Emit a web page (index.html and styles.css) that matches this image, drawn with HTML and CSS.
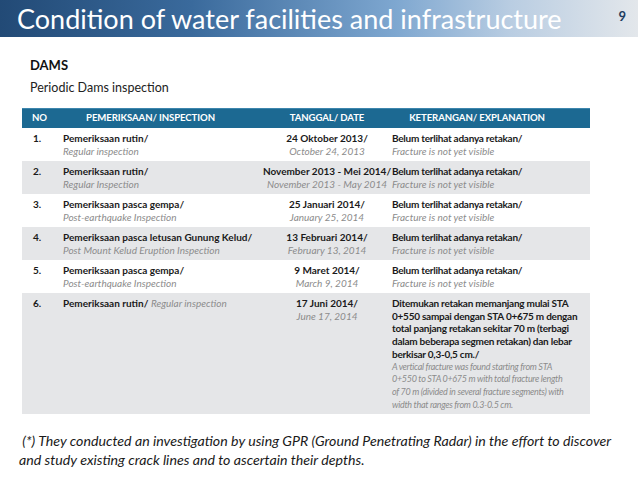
FILE: index.html
```html
<!DOCTYPE html>
<html lang="en">
<head>
<meta charset="utf-8">
<title>Condition of water facilities and infrastructure</title>
<link rel="stylesheet" href="styles.css">
</head>
<body>
<header class="title-bar">
  <h1 class="title">Condition of water facilities and infrastructure</h1>
  <span class="page-no">9</span>
</header>
<main class="content">
  <h2 class="section">DAMS</h2>
  <p class="subtitle">Periodic Dams inspection</p>
  <div class="table">
    <div class="row head">
      <div class="c-no">NO</div>
      <div class="c-insp">PEMERIKSAAN/ INSPECTION</div>
      <div class="c-date">TANGGAL/ DATE</div>
      <div class="c-exp">KETERANGAN/ EXPLANATION</div>
    </div>
    <div class="row">
      <div class="c-no b">1.</div>
      <div class="c-insp"><span class="b">Pemeriksaan rutin/</span><span class="i">Regular inspection</span></div>
      <div class="c-date"><span class="b">24 Oktober 2013/</span><span class="i">October 24, 2013</span></div>
      <div class="c-exp"><span class="b">Belum terlihat adanya retakan/</span><span class="i">Fracture is not yet visible</span></div>
    </div>
    <div class="row alt">
      <div class="c-no b">2.</div>
      <div class="c-insp"><span class="b">Pemeriksaan rutin/</span><span class="i">Regular Inspection</span></div>
      <div class="c-date"><span class="b">November 2013 - Mei 2014/</span><span class="i">November 2013 - May 2014</span></div>
      <div class="c-exp"><span class="b">Belum terlihat adanya retakan/</span><span class="i">Fracture is not yet visible</span></div>
    </div>
    <div class="row">
      <div class="c-no b">3.</div>
      <div class="c-insp"><span class="b">Pemeriksaan pasca gempa/</span><span class="i">Post-earthquake Inspection</span></div>
      <div class="c-date"><span class="b">25 Januari 2014/</span><span class="i">January 25, 2014</span></div>
      <div class="c-exp"><span class="b">Belum terlihat adanya retakan/</span><span class="i">Fracture is not yet visible</span></div>
    </div>
    <div class="row alt">
      <div class="c-no b">4.</div>
      <div class="c-insp"><span class="b">Pemeriksaan pasca letusan Gunung Kelud/</span><span class="i">Post Mount Kelud Eruption Inspection</span></div>
      <div class="c-date"><span class="b">13 Februari 2014/</span><span class="i">February 13, 2014</span></div>
      <div class="c-exp"><span class="b">Belum terlihat adanya retakan/</span><span class="i">Fracture is not yet visible</span></div>
    </div>
    <div class="row">
      <div class="c-no b">5.</div>
      <div class="c-insp"><span class="b">Pemeriksaan pasca gempa/</span><span class="i">Post-earthquake Inspection</span></div>
      <div class="c-date"><span class="b">9 Maret 2014/</span><span class="i">March 9, 2014</span></div>
      <div class="c-exp"><span class="b">Belum terlihat adanya retakan/</span><span class="i">Fracture is not yet visible</span></div>
    </div>
    <div class="row alt last">
      <div class="c-no b">6.</div>
      <div class="c-insp"><p class="inline"><span class="b">Pemeriksaan rutin/</span> <span class="i-inline">Regular inspection</span></p></div>
      <div class="c-date"><span class="b">17 Juni 2014/</span><span class="i">June 17, 2014</span></div>
      <div class="c-exp">
        <span class="b">Ditemukan retakan memanjang mulai STA</span>
        <span class="b">0+550 sampai dengan STA 0+675 m dengan</span>
        <span class="b">total panjang retakan sekitar 70 m (terbagi</span>
        <span class="b">dalam beberapa segmen retakan) dan lebar</span>
        <span class="b">berkisar 0,3-0,5 cm./</span>
        <span class="i small">A vertical fracture was found starting from STA</span>
        <span class="i small">0+550 to STA 0+675 m with total fracture length</span>
        <span class="i small">of 70 m (divided in several fracture segments) with</span>
        <span class="i small">width that ranges from 0.3-0.5 cm.</span>
      </div>
    </div>
  </div>
  <p class="note">&nbsp;(*) They conducted an investigation by using GPR (Ground Penetrating Radar) in the effort to discover and study existing crack lines and to ascertain their depths.</p>
</main>
</body>
</html>
```

FILE: styles.css
```css
* { box-sizing: border-box; }
html, body { margin: 0; padding: 0; background: #ffffff; }
body {
  width: 638px;
  height: 479px;
  overflow: hidden;
  font-family: Lato, "Open Sans", sans-serif;
  color: #1a1a1a;
}

.title-bar {
  height: 37px;
  display: flex;
  align-items: center;
  justify-content: space-between;
  padding: 0 12px 0 17px;
  background: linear-gradient(90deg, #224a76 0%, #3a6a9c 30%, #7ea7d0 62%, #b9cde2 80%, #e3e7eb 100%);
}
.title {
  margin: 0;
  font-family: Lato, "Open Sans", sans-serif;
  font-weight: 400;
  font-size: 27px;
  color: #ffffff;
  line-height: 37px;
  white-space: nowrap;
}
.page-no {
  font-weight: 700;
  font-size: 13px;
  color: #1f3d60;
  margin-top: -6px;
}

.content { padding: 0 0 0 22px; }

.section {
  margin: 19px 0 0 8px;
  font-size: 13px;
  font-weight: 700;
  line-height: 18px;
  color: #111;
}
.subtitle {
  margin: 5px 0 0 8px;
  font-size: 12.5px;
  line-height: 18px;
  color: #222;
}

.table {
  margin-top: 11px;
  width: 568px;
  font-family: Lato, "Open Sans", sans-serif;
}
.row {
  display: grid;
  grid-template-columns: 33px 207px 130px 1fr;
  min-height: 33px;
  padding: 4px 0 3px;
  font-size: 10px;
  line-height: 12.7px;
  background: #ffffff;
}
.row.alt { background: #e5e6e8; }
.row.last { padding-bottom: 3px; }
.row.head {
  min-height: 20px;
  padding: 0;
  align-items: center;
  background: #1c6992;
  color: #ffffff;
  font-weight: 700;
  font-size: 9.6px;
  letter-spacing: -0.1px;
  border-top: 1px solid #3d86ad;
}
.head .c-no { padding-left: 10px; }
.head .c-insp { text-align: center; padding: 0 16px 0 0; }
.head .c-date { text-align: center; }
.head .c-exp { text-align: center; padding: 0 28px 0 0; }

.c-no { padding-left: 11px; }
.c-insp { padding-left: 8px; }
.c-date { text-align: center; }
.c-exp { padding-left: 0; white-space: nowrap; }

.b { display: block; font-weight: 700; color: #1a1a1a; }
.c-exp .b { letter-spacing: -0.25px; }
.i { display: block; font-style: italic; color: #8c8c8c; }
.i.small { font-size: 9px; letter-spacing: -0.3px; }
.inline { margin: 0; }
.inline .b { display: inline; }
.i-inline { font-style: italic; color: #8c8c8c; }

.note {
  margin: 17px 0 0 -3px;
  font-style: italic;
  font-size: 14.2px;
  line-height: 19px;
  color: #1a1a1a;
  width: 596px;
}
```
